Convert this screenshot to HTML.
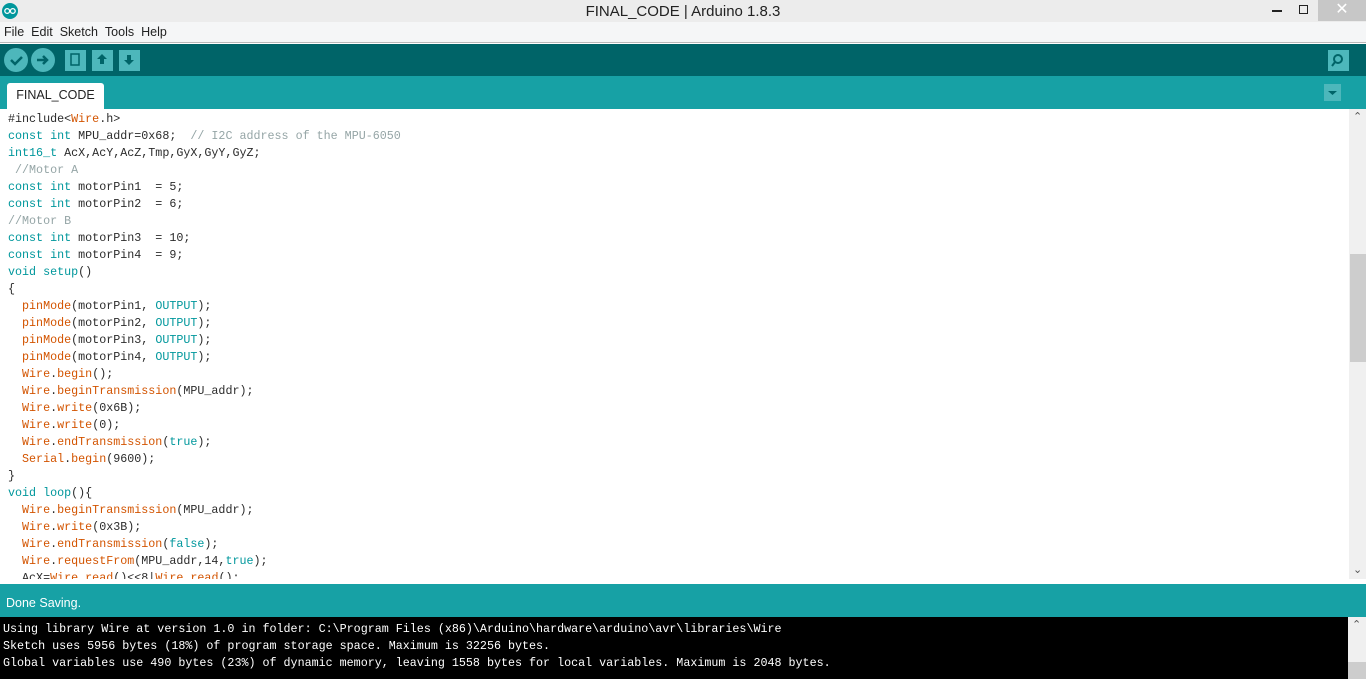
<!DOCTYPE html>
<html><head><meta charset="utf-8"><style>
*{margin:0;padding:0;box-sizing:border-box}
body{width:1366px;height:679px;overflow:hidden;background:#fff;font-family:"Liberation Sans",sans-serif;position:relative}
.abs{position:absolute}
#title{left:0;top:0;width:1366px;height:22px;background:#ececec;text-align:center;font-size:15px;line-height:23px;color:#222}
#menu{left:0;top:22px;width:1366px;height:21px;background:#f5f6f7;font-size:12.5px;line-height:21px;color:#222;border-bottom:1px solid #b9b9b9}
#menu span{margin-left:4px;margin-right:3px}
#tool{left:0;top:44px;width:1366px;height:32px;background:#006468}
#tabs{left:0;top:76px;width:1366px;height:33px;background:#17a1a5}
#tab{left:7px;top:83px;width:97px;height:26px;background:#fff;border-radius:3px 3px 0 0;font-size:12.5px;line-height:24px;text-align:center;color:#222}
#code{left:8px;top:111px;font-family:"Liberation Mono",monospace;font-size:11.7px;line-height:17px;color:#2b2b2b;white-space:pre}
.k{color:#00979c}.f{color:#d35400}.c{color:#95a5a6}
#vs{left:1349px;top:109px;width:17px;height:470px;background:#f0f0f0}
#thumb{left:1350px;top:254px;width:16px;height:108px;background:#cdcdcd}
#status{left:0;top:584px;width:1366px;height:33px;background:#17a1a5;color:#fff;font-size:12.5px;line-height:38px;padding-left:6px}
#cons{left:0;top:617px;width:1348px;height:62px;background:#000;color:#fff;font-family:"Liberation Mono",monospace;font-size:11.7px;line-height:17px;padding:4px 0 0 3px;white-space:pre}
#cs{left:1348px;top:617px;width:18px;height:62px;background:#f0f0f0}
.btn{position:absolute;top:48px;width:24px;height:24px;background:#4db7bb}
</style></head><body>
<div class="abs" id="title">FINAL_CODE | Arduino 1.8.3</div>
<svg class="abs" style="left:2px;top:3px" width="16" height="16"><circle cx="8" cy="8" r="8" fill="#00979c"/><circle cx="5.2" cy="8" r="2.4" fill="none" stroke="#fff" stroke-width="1.3"/><circle cx="10.8" cy="8" r="2.4" fill="none" stroke="#fff" stroke-width="1.3"/></svg>
<div class="abs" style="left:1272px;top:10px;width:10px;height:2px;background:#222"></div>
<div class="abs" style="left:1299px;top:5px;width:9px;height:9px;border:1.5px solid #222"></div>
<div class="abs" style="left:1318px;top:0;width:48px;height:21px;background:#c7c7c7;color:#fff;text-align:center;font-size:16px;line-height:20px">✕</div>
<div class="abs" id="menu"><span>File</span><span>Edit</span><span>Sketch</span><span>Tools</span><span>Help</span></div>
<div class="abs" id="tool"></div>
<div class="btn" style="left:4px;border-radius:12px"></div>
<div class="btn" style="left:31px;border-radius:12px"></div>
<div class="btn" style="left:65px;width:21px;height:21px;top:50px"></div>
<div class="btn" style="left:92px;width:21px;height:21px;top:50px"></div>
<div class="btn" style="left:119px;width:21px;height:21px;top:50px"></div>
<svg class="abs" style="left:0;top:44px" width="150" height="32"><path d="M11 16l4 4 7-7" stroke="#006468" stroke-width="2.5" fill="none"/><path d="M37 16h10M43 12l4 4-4 4" stroke="#006468" stroke-width="2.5" fill="none"/><rect x="71" y="10" width="8" height="11" fill="none" stroke="#006468" stroke-width="1.5"/><path d="M102 10l-5 5h3v5h4v-5h3z" fill="#006468"/><path d="M129 21l-5-5h3v-5h4v5h3z" fill="#006468"/></svg>
<div class="abs" style="left:1328px;top:50px;width:21px;height:21px;background:#4db7bb"></div>
<svg class="abs" style="left:1328px;top:50px" width="21" height="21"><circle cx="10" cy="9" r="4" fill="none" stroke="#006468" stroke-width="2"/><path d="M7 12l-3 4" stroke="#006468" stroke-width="2"/></svg>
<div class="abs" id="tabs"></div>
<div class="abs" id="tab">FINAL_CODE</div>
<div class="abs" style="left:1324px;top:84px;width:17px;height:17px;background:#4db7bb"></div>
<svg class="abs" style="left:1324px;top:84px" width="17" height="17"><path d="M4 7h9l-4.5 4z" fill="#006468"/></svg>
<div class="abs" id="code">#include&lt;<span class="f">Wire</span>.h&gt;
<span class="k">const</span> <span class="k">int</span> MPU_addr=0x68;  <span class="c">// I2C address of the MPU-6050</span>
<span class="k">int16_t</span> AcX,AcY,AcZ,Tmp,GyX,GyY,GyZ;
 <span class="c">//Motor A</span>
<span class="k">const</span> <span class="k">int</span> motorPin1  = 5;
<span class="k">const</span> <span class="k">int</span> motorPin2  = 6;
<span class="c">//Motor B</span>
<span class="k">const</span> <span class="k">int</span> motorPin3  = 10;
<span class="k">const</span> <span class="k">int</span> motorPin4  = 9;
<span class="k">void</span> <span class="k">setup</span>()
{
  <span class="f">pinMode</span>(motorPin1, <span class="k">OUTPUT</span>);
  <span class="f">pinMode</span>(motorPin2, <span class="k">OUTPUT</span>);
  <span class="f">pinMode</span>(motorPin3, <span class="k">OUTPUT</span>);
  <span class="f">pinMode</span>(motorPin4, <span class="k">OUTPUT</span>);
  <span class="f">Wire</span>.<span class="f">begin</span>();
  <span class="f">Wire</span>.<span class="f">beginTransmission</span>(MPU_addr);
  <span class="f">Wire</span>.<span class="f">write</span>(0x6B);
  <span class="f">Wire</span>.<span class="f">write</span>(0);
  <span class="f">Wire</span>.<span class="f">endTransmission</span>(<span class="k">true</span>);
  <span class="f">Serial</span>.<span class="f">begin</span>(9600);
}
<span class="k">void</span> <span class="k">loop</span>(){
  <span class="f">Wire</span>.<span class="f">beginTransmission</span>(MPU_addr);
  <span class="f">Wire</span>.<span class="f">write</span>(0x3B);
  <span class="f">Wire</span>.<span class="f">endTransmission</span>(<span class="k">false</span>);
  <span class="f">Wire</span>.<span class="f">requestFrom</span>(MPU_addr,14,<span class="k">true</span>);
  AcX=<span class="f">Wire</span>.<span class="f">read</span>()&lt;&lt;8|<span class="f">Wire</span>.<span class="f">read</span>();</div>
<div class="abs" style="left:0;top:579px;width:1366px;height:5px;background:#fff"></div>
<div class="abs" id="vs"></div>
<div class="abs" id="thumb"></div>
<div class="abs" style="left:1353px;top:110px;font-size:11px;color:#555">⌃</div>
<div class="abs" style="left:1353px;top:563px;font-size:11px;color:#555">⌄</div>
<div class="abs" id="status">Done Saving.</div>
<div class="abs" id="cons">Using library Wire at version 1.0 in folder: C:\Program Files (x86)\Arduino\hardware\arduino\avr\libraries\Wire
Sketch uses 5956 bytes (18%) of program storage space. Maximum is 32256 bytes.
Global variables use 490 bytes (23%) of dynamic memory, leaving 1558 bytes for local variables. Maximum is 2048 bytes.</div>
<div class="abs" id="cs"></div>
<div class="abs" style="left:1352px;top:618px;font-size:11px;color:#555">⌃</div>
<div class="abs" style="left:1348px;top:662px;width:18px;height:17px;background:#cdcdcd"></div>
</body></html>
